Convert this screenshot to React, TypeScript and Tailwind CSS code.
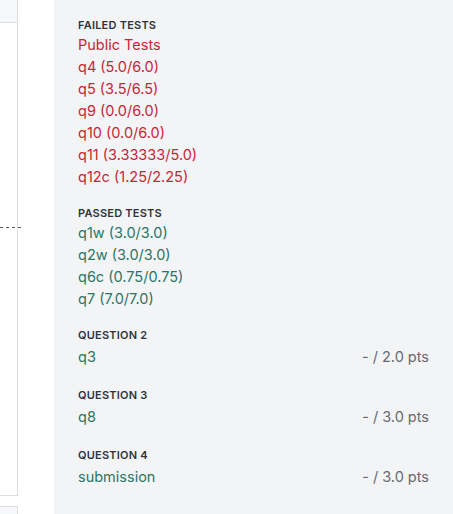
const failed = [
  "Public Tests",
  "q4 (5.0/6.0)",
  "q5 (3.5/6.5)",
  "q9 (0.0/6.0)",
  "q10 (0.0/6.0)",
  "q11 (3.33333/5.0)",
  "q12c (1.25/2.25)",
];

const passed = ["q1w (3.0/3.0)", "q2w (3.0/3.0)", "q6c (0.75/0.75)", "q7 (7.0/7.0)"];

const questions = [
  { title: "Question 2", name: "q3", pts: "- / 2.0 pts", mt: "mt-[17px]" },
  { title: "Question 3", name: "q8", pts: "- / 3.0 pts", mt: "mt-[19px]" },
  { title: "Question 4", name: "submission", pts: "- / 3.0 pts", mt: "mt-[19px]" },
];

function Heading({ children }: { children: string }) {
  return (
    <div className="text-[11px] leading-[17px] font-semibold uppercase tracking-[0.02em] text-[#2f353b]">
      {children}
    </div>
  );
}

export default function App() {
  return (
    <div
      className="flex h-[514px] w-[453px] overflow-hidden bg-white"
      style={{ fontFamily: "Inter, 'Open Sans', sans-serif" }}
    >
      {/* left edge of the code viewer */}
      <div className="flex w-[18px] shrink-0 flex-col">
        <div className="flex h-[496px] flex-col border-r border-b border-[#dcdde0]">
          <div className="h-[23px] border-b border-[#dcdde0] bg-[#f7f8fa]" />
          <div className="mt-[204px] h-px overflow-visible">
            <svg width="26" height="2" className="overflow-visible">
              <line x1="0" y1="0.5" x2="24" y2="0.5" stroke="#555" strokeDasharray="3 3" />
            </svg>
          </div>
        </div>
        <div className="mt-[10px] flex-1 border-t border-r border-[#dcdde0] bg-[#f7f8fa]" />
      </div>
      <div className="w-[36px] shrink-0" />

      {/* results panel */}
      <div className="flex-1 bg-[#f3f4f6] pt-[17px] pl-6 pr-6">
        <Heading>Failed Tests</Heading>
        <ul>
          {failed.map((t) => (
            <li key={t} className="text-[14.5px] leading-[22px] text-[#c72637]">
              {t}
            </li>
          ))}
        </ul>

        <div className="mt-[17px]">
          <Heading>Passed Tests</Heading>
          <ul>
            {passed.map((t) => (
              <li key={t} className="text-[14.5px] leading-[22px] text-[#2b7566]">
                {t}
              </li>
            ))}
          </ul>
        </div>

        {questions.map((q) => (
          <div key={q.title} className={q.mt}>
            <Heading>{q.title}</Heading>
            <div className="mt-[2px] flex items-center justify-between text-[14.5px] leading-[22px]">
              <span className="text-[#2b7566]">{q.name}</span>
              <span className="text-[#666a70]">{q.pts}</span>
            </div>
          </div>
        ))}
      </div>
    </div>
  );
}
